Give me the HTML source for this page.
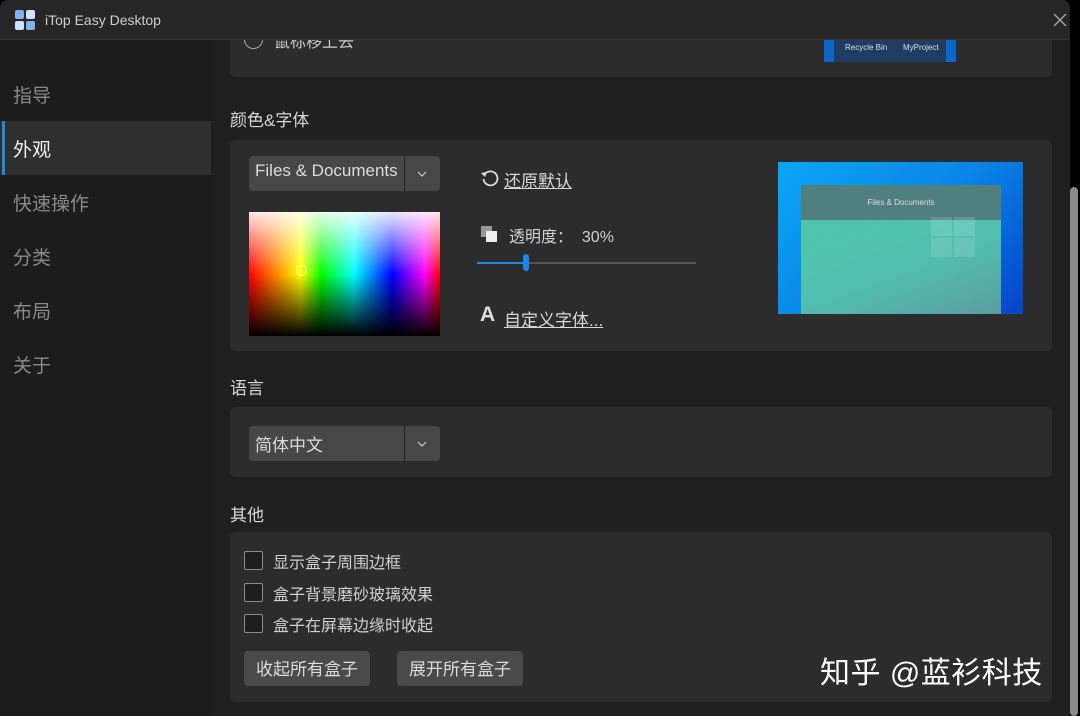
<!DOCTYPE html>
<html><head><meta charset="utf-8"><style>
*{margin:0;padding:0;box-sizing:border-box}
body{width:1080px;height:716px;background:#000;overflow:hidden;font-family:"Liberation Sans","Noto Sans CJK SC",sans-serif;color:#d8d8d8;position:relative}
.win{position:absolute;left:0;top:0;width:1070px;height:716px;background:#1c1c1c;border-radius:8px 8px 0 0;overflow:hidden}
.title{position:absolute;left:0;top:0;width:1070px;height:40px;background:#262626;border-bottom:1px solid #333;z-index:2}
.title .t{position:absolute;left:45px;top:12px;font-size:14px;color:#cfcfcf}
.side{position:absolute;left:0;top:40px;width:212px;height:676px;background:#1c1c1c}
.side .it{position:absolute;left:13px;font-size:19px;color:#8a8a8a}
.sel{position:absolute;left:0;top:81px;width:211px;height:54px;background:#2f2f2f}
.sel:before{content:"";position:absolute;left:2px;top:0;width:3px;height:54px;background:#1e88e5}
.main{position:absolute;left:212px;top:40px;width:858px;height:676px;background:#1f1f1f}
.card{position:absolute;left:230px;width:822px;background:#2c2c2c;border-radius:5px}
.h{position:absolute;left:230px;font-size:17px;color:#d8d8d8}
.dd{position:absolute;left:249px;width:191px;height:35px;background:#474747;border-radius:4px;font-size:17px;color:#dcdcdc;padding:5px 6px}
.dd:after{content:"";position:absolute;left:155px;top:0;width:1px;height:35px;background:#222}
.dd svg{position:absolute;left:168px;top:14px}
.cb{position:absolute;left:244px;width:19px;height:19px;border:1.5px solid #8a8a8a;border-radius:2px;background:#1e1e1e}
.cl{position:absolute;left:273px;font-size:16px;color:#d0d0d0}
.btn{position:absolute;top:651px;height:35px;background:#4a4a4a;border-radius:4px;font-size:17px;color:#dcdcdc;padding:4px 12px}
</style></head><body>
<div class="win">
<div class="title">
<svg style="position:absolute;left:15px;top:10px" width="20" height="20" viewBox="0 0 20 20"><rect x="0" y="0" width="9" height="9" rx="2" fill="#7fb2f0"/><rect x="11" y="0" width="9" height="9" rx="2" fill="#d0e2fa"/><rect x="0" y="11" width="9" height="9" rx="2" fill="#d0e2fa"/><rect x="11" y="11" width="9" height="9" rx="2" fill="#7fb2f0"/></svg>
<div class="t">iTop Easy Desktop</div>
<svg style="position:absolute;left:1053px;top:13px" width="14" height="14" viewBox="0 0 14 14"><path d="M1 1L13 13M13 1L1 13" stroke="#aaa" stroke-width="1.3"/></svg>
</div>
<div class="side">
<div class="sel"></div>
<div class="it" style="top:41px">指导</div>
<div class="it" style="top:95px;color:#f0f0f0">外观</div>
<div class="it" style="top:149px">快速操作</div>
<div class="it" style="top:203px">分类</div>
<div class="it" style="top:257px">布局</div>
<div class="it" style="top:311px">关于</div>
</div>
<div class="main"></div>

<div class="card" style="top:20px;height:57px">
<div style="position:absolute;left:14px;top:10px;width:19px;height:19px;border:1.5px solid #aaa;border-radius:50%"></div>
<div style="position:absolute;left:44px;top:8px;font-size:16px;color:#ccc">鼠标移上去</div>
<div style="position:absolute;left:594px;top:20px;width:132px;height:22px;background:#1f3d63"><div style="position:absolute;left:0;top:0;width:10px;height:22px;background:#0a66c8"></div><div style="position:absolute;right:0;top:0;width:10px;height:22px;background:#0a66c8"></div><span style="position:absolute;left:21px;top:3px;font-size:8px;color:#ddd">Recycle Bin</span><span style="position:absolute;left:79px;top:3px;font-size:8px;color:#ddd">MyProject</span></div>
</div>

<div class="h" style="top:106px">颜色&amp;字体</div>
<div class="card" style="top:140px;height:211px"></div>
<div class="dd" style="top:156px">Files &amp; Documents<svg width="10" height="8" viewBox="0 0 10 8"><path d="M1 2L5 6L9 2" stroke="#ccc" fill="none" stroke-width="1.2"/></svg></div>
<div style="position:absolute;left:249px;top:212px;width:191px;height:124px;background:linear-gradient(to bottom,rgba(255,255,255,.9),rgba(255,255,255,0) 50%,rgba(0,0,0,0) 50%,#000),linear-gradient(to right,#f00,#ff0 27%,#0f0 38%,#0ff 55%,#00f 75%,#f0f 92%,#f00)"></div>
<div style="position:absolute;left:296px;top:265px;width:11px;height:11px;border:1.5px solid #ffff90;border-radius:50%"></div>
<svg style="position:absolute;left:480px;top:168px" width="20" height="20" viewBox="0 0 20 20"><path d="M5 6A7 7 0 1 1 3.5 11" stroke="#ddd" stroke-width="1.8" fill="none"/><path d="M1 5L5 9L7 4Z" fill="#ddd"/></svg>
<div style="position:absolute;left:504px;top:167px;font-size:17px;color:#d8d8d8;text-decoration:underline">还原默认</div>
<svg style="position:absolute;left:481px;top:226px" width="17" height="17" viewBox="0 0 17 17"><rect x="0" y="0" width="11" height="11" fill="#999"/><rect x="5" y="5" width="11" height="11" fill="#eee"/></svg>
<div style="position:absolute;left:509px;top:223px;font-size:16px;color:#d0d0d0">透明度：&nbsp;&nbsp;30%</div>
<div style="position:absolute;left:477px;top:262px;width:219px;height:2px;background:#555"></div>
<div style="position:absolute;left:477px;top:262px;width:50px;height:2px;background:#1e88e5"></div>
<div style="position:absolute;left:523px;top:254px;width:6px;height:17px;background:#1e88e5;border-radius:3px"></div>
<div style="position:absolute;left:480px;top:303px;font-size:21px;font-weight:bold;color:#ddd">A</div>
<div style="position:absolute;left:504px;top:306px;font-size:17px;color:#d8d8d8;text-decoration:underline">自定义字体...</div>
<div style="position:absolute;left:778px;top:162px;width:245px;height:152px;background:linear-gradient(135deg,#0aa6f5 0%,#0a86e8 50%,#0544c8 100%)">
<div style="position:absolute;left:23px;top:23px;width:200px;height:129px;background:linear-gradient(160deg,#4ccaa8,#52bfb0 60%,#5a9ea0)"></div>
<div style="position:absolute;left:23px;top:23px;width:200px;height:35px;background:#4f7f7e;color:#ddd;font-size:8px;text-align:center;padding-top:13px">Files &amp; Documents</div>
<div style="position:absolute;left:153px;top:55px;width:21px;height:19px;background:rgba(255,255,255,.15)"></div>
<div style="position:absolute;left:176px;top:55px;width:21px;height:19px;background:rgba(255,255,255,.15)"></div>
<div style="position:absolute;left:153px;top:76px;width:21px;height:19px;background:rgba(255,255,255,.12)"></div>
<div style="position:absolute;left:176px;top:76px;width:21px;height:19px;background:rgba(255,255,255,.12)"></div>
</div>

<div class="h" style="top:374px">语言</div>
<div class="card" style="top:407px;height:70px"></div>
<div class="dd" style="top:426px">简体中文<svg width="10" height="8" viewBox="0 0 10 8"><path d="M1 2L5 6L9 2" stroke="#ccc" fill="none" stroke-width="1.2"/></svg></div>

<div class="h" style="top:501px">其他</div>
<div class="card" style="top:532px;height:170px"></div>
<div class="cb" style="top:551px"></div><div class="cl" style="top:549px">显示盒子周围边框</div>
<div class="cb" style="top:583px"></div><div class="cl" style="top:581px">盒子背景磨砂玻璃效果</div>
<div class="cb" style="top:614px"></div><div class="cl" style="top:612px">盒子在屏幕边缘时收起</div>
<div class="btn" style="left:244px">收起所有盒子</div>
<div class="btn" style="left:397px">展开所有盒子</div>
<div style="position:absolute;left:820px;top:648px;font-size:30px;color:#fff;letter-spacing:0.5px">知乎 @蓝衫科技</div>
</div>
<div style="position:absolute;left:1070px;top:187px;width:8px;height:529px;background:#8a8a8a;border-radius:4px"></div>
</body></html>
